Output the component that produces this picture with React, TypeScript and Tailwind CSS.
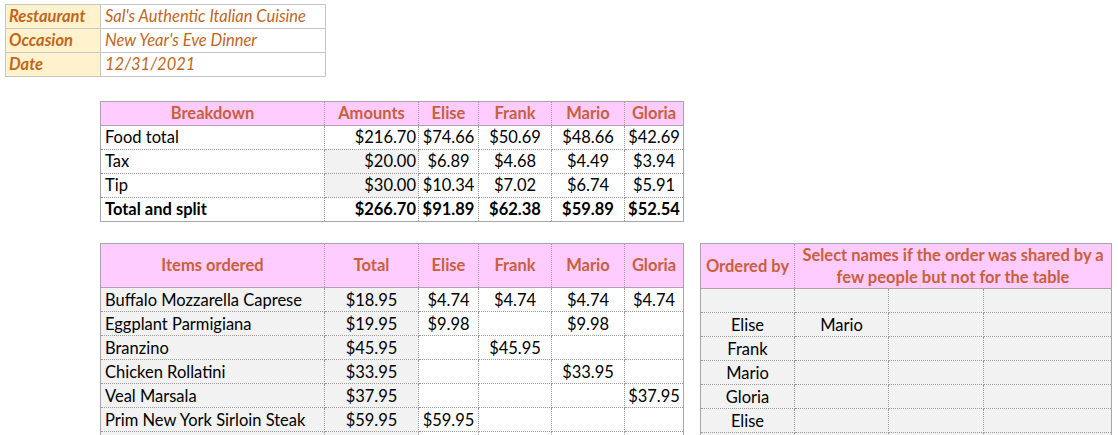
import React from "react";

type ItemRow = {
    name: string;
    total: string;
    split: string[];
    by: string;
    shared: string[];
};

const breakdown = [
    { label: "Food total", amount: "$216.70", gray: false, split: ["$74.66", "$50.69", "$48.66", "$42.69"] },
    { label: "Tax", amount: "$20.00", gray: true, split: ["$6.89", "$4.68", "$4.49", "$3.94"] },
    { label: "Tip", amount: "$30.00", gray: true, split: ["$10.34", "$7.02", "$6.74", "$5.91"] },
];

const items: ItemRow[] = [
    { name: "Buffalo Mozzarella Caprese", total: "$18.95", split: ["$4.74", "$4.74", "$4.74", "$4.74"], by: "", shared: ["", "", ""] },
    { name: "Eggplant Parmigiana", total: "$19.95", split: ["$9.98", "", "$9.98", ""], by: "Elise", shared: ["Mario", "", ""] },
    { name: "Branzino", total: "$45.95", split: ["", "$45.95", "", ""], by: "Frank", shared: ["", "", ""] },
    { name: "Chicken Rollatini", total: "$33.95", split: ["", "", "$33.95", ""], by: "Mario", shared: ["", "", ""] },
    { name: "Veal Marsala", total: "$37.95", split: ["", "", "", "$37.95"], by: "Gloria", shared: ["", "", ""] },
    { name: "Prim New York Sirloin Steak", total: "$59.95", split: ["$59.95", "", "", ""], by: "Elise", shared: ["", "", ""] },
    { name: "", total: "", split: ["", "", "", ""], by: "", shared: ["", "", ""] },
];

const people = ["Elise", "Frank", "Mario", "Gloria"];

const cell = "border border-dotted border-[#9a9a9a] h-[24px] px-[4px] py-0 leading-none whitespace-nowrap";
const head = "border border-dotted border-[#a898a8] bg-[#ffccff] text-[#c8603c] font-bold text-center px-[3px] whitespace-nowrap";

const App: React.FC = () => {
    return (
        <div className="w-[1118px] h-[435px] overflow-hidden bg-white text-[16.5px] text-black font-['Lato','Liberation_Sans',sans-serif]">
            {/* event info */}
            <div className="pl-[5px] pt-[4px]">
                <table className="border-collapse border border-[#c6c6c6] table-fixed w-[320px]">
                    <colgroup>
                        <col className="w-[95px]" />
                        <col className="w-[225px]" />
                    </colgroup>
                    <tbody>
                        {[
                            ["Restaurant", "Sal's Authentic Italian Cuisine"],
                            ["Occasion", "New Year's Eve Dinner"],
                            ["Date", "12/31/2021"],
                        ].map(([k, v]) => (
                            <tr key={k}>
                                <td className="border border-[#c6c6c6] h-[24px] px-[3px] bg-[#fff2cc] text-[#c2661c] font-bold italic leading-none">
                                    {k}
                                </td>
                                <td className="border border-[#c6c6c6] h-[24px] px-[4px] text-[#c2661c] italic leading-none">
                                    {v}
                                </td>
                            </tr>
                        ))}
                    </tbody>
                </table>
            </div>

            {/* breakdown */}
            <div className="pl-[100px] pt-[24px]">
                <table className="border-collapse border border-[#a6a6a6] table-fixed w-[583px]">
                    <colgroup>
                        <col className="w-[224px]" />
                        <col className="w-[94px]" />
                        <col className="w-[60px]" />
                        <col className="w-[73px]" />
                        <col className="w-[73px]" />
                        <col className="w-[59px]" />
                    </colgroup>
                    <thead>
                        <tr className="border-b border-solid border-[#b0a0b0]">
                            <th className={`${head} h-[24px] leading-none`}>Breakdown</th>
                            <th className={`${head} h-[24px] leading-none`}>Amounts</th>
                            {people.map((p) => (
                                <th key={p} className={`${head} h-[24px] leading-none`}>{p}</th>
                            ))}
                        </tr>
                    </thead>
                    <tbody>
                        {breakdown.map((r) => (
                            <tr key={r.label}>
                                <td className={cell}>{r.label}</td>
                                <td className={`${cell} text-right !px-[2px] ${r.gray ? "bg-[#f2f2f2]" : ""}`}>{r.amount}</td>
                                {r.split.map((s, i) => (
                                    <td key={i} className={`${cell} text-center !px-0`}>{s}</td>
                                ))}
                            </tr>
                        ))}
                        <tr className="font-bold border-b border-solid border-[#a6a6a6]">
                            <td className={cell}>Total and split</td>
                            <td className={`${cell} text-right !px-[2px]`}>$266.70</td>
                            {["$91.89", "$62.38", "$59.89", "$52.54"].map((s) => (
                                <td key={s} className={`${cell} text-center !px-0`}>{s}</td>
                            ))}
                        </tr>
                    </tbody>
                </table>
            </div>

            {/* items + ordered by */}
            <div className="pl-[100px] pt-[21px] flex items-start gap-[16px]">
                <table className="border-collapse border border-[#a6a6a6] table-fixed w-[583px]">
                    <colgroup>
                        <col className="w-[224px]" />
                        <col className="w-[94px]" />
                        <col className="w-[60px]" />
                        <col className="w-[73px]" />
                        <col className="w-[73px]" />
                        <col className="w-[59px]" />
                    </colgroup>
                    <thead>
                        <tr className="border-b border-solid border-[#b0a0b0]">
                            <th className={`${head} h-[44px] leading-none`}>Items ordered</th>
                            <th className={`${head} h-[44px] leading-none`}>Total</th>
                            {people.map((p) => (
                                <th key={p} className={`${head} h-[44px] leading-none`}>{p}</th>
                            ))}
                        </tr>
                    </thead>
                    <tbody>
                        {items.map((r, idx) => (
                            <tr key={idx}>
                                <td className={`${cell} bg-[#f2f2f2] align-bottom pb-[3px]`}>{r.name}</td>
                                <td className={`${cell} bg-[#f2f2f2] text-center align-bottom pb-[3px]`}>{r.total}</td>
                                {r.split.map((s, i) => (
                                    <td key={i} className={`${cell} text-center !px-0 align-bottom pb-[3px]`}>{s}</td>
                                ))}
                            </tr>
                        ))}
                    </tbody>
                </table>

                <table className="border-collapse border border-[#a6a6a6] table-fixed w-[411px]">
                    <colgroup>
                        <col className="w-[94px]" />
                        <col className="w-[94px]" />
                        <col className="w-[95px]" />
                        <col className="w-[128px]" />
                    </colgroup>
                    <thead>
                        <tr className="border-b border-solid border-[#b0a0b0]">
                            <th className={`${head} h-[44px] leading-none`}>Ordered by</th>
                            <th colSpan={3} className={`${head} h-[44px] leading-[22px] align-top`}>
                                Select names if the order was shared by a
                                <br />
                                few people but not for the table
                            </th>
                        </tr>
                    </thead>
                    <tbody>
                        {items.map((r, idx) => (
                            <tr key={idx}>
                                <td className={`${cell} bg-[#f2f2f2] text-center align-bottom pb-[3px]`}>{r.by}</td>
                                {r.shared.map((s, i) => (
                                    <td key={i} className={`${cell} bg-[#f2f2f2] text-center align-bottom pb-[3px]`}>{s}</td>
                                ))}
                            </tr>
                        ))}
                    </tbody>
                </table>
            </div>
        </div>
    );
};

export default App;
